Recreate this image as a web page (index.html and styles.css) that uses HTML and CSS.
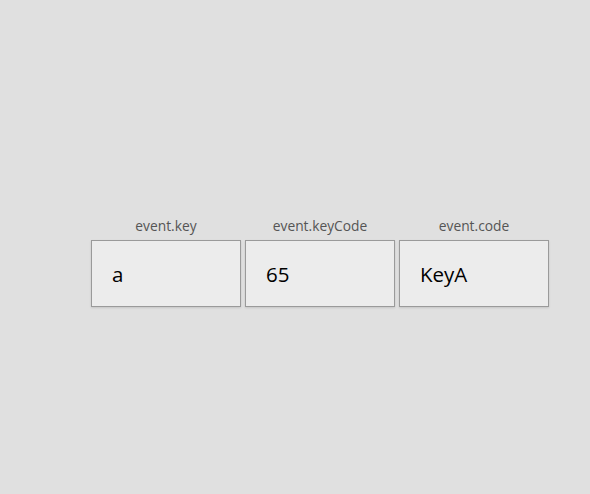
FILE: index.html
```html
<!DOCTYPE html>
<html>
<head>
<meta charset="utf-8">
<link rel="stylesheet" href="styles.css">
</head>
<body>
<div class="keys">
  <div class="col">
    <div class="label">event.key</div>
    <div class="box">a</div>
  </div>
  <div class="col">
    <div class="label">event.keyCode</div>
    <div class="box">65</div>
  </div>
  <div class="col">
    <div class="label">event.code</div>
    <div class="box">KeyA</div>
  </div>
</div>
</body>
</html>
```
FILE: styles.css
```css
html, body {
  margin: 0;
  padding: 0;
  background: #e0e0e0;
  height: 100%;
}
body {
  font-family: "Open Sans", "Noto Sans", sans-serif;
}
.keys {
  display: flex;
  gap: 4px;
  padding-top: 216px;
  padding-left: 91px;
}
.col {
  display: flex;
  flex-direction: column;
  width: 150px;
}
.label {
  text-align: center;
  font-size: 13.8px;
  line-height: 20px;
  color: #555;
  margin-bottom: 4px;
}
.box {
  box-sizing: border-box;
  height: 67px;
  border: 1px solid #9a9a9a;
  background: #ececec;
  box-shadow: 0 1px 2px rgba(0,0,0,0.12);
  padding-left: 20px;
  display: flex;
  align-items: center;
  font-size: 20.5px;
  font-weight: 500;
  color: #000;
}
```
